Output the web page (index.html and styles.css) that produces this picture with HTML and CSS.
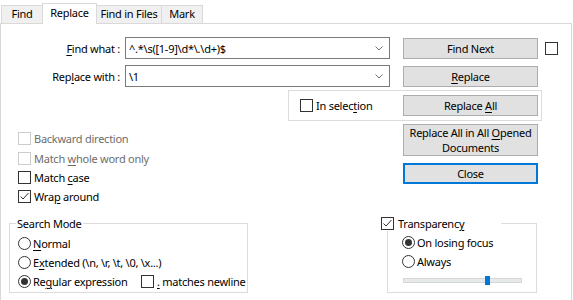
FILE: index.html
```html
<!DOCTYPE html>
<html>
	<head>
		<meta charset="utf-8">
		<title>Replace</title>
		<link rel="stylesheet" href="styles.css">
	</head>
	<body>
		<div class="tabs">
			<span class="tab tab-find">Find</span>
			<span class="tab tab-replace active">Replace</span>
			<span class="tab tab-files">Find in Files</span>
			<span class="tab tab-mark">Mark</span>
		</div>
		<div class="panel">
			<div class="row first">
				<span class="lbl"><u>F</u>ind what :</span>
				<div class="combo">
					<span class="val">^.*\s([1-9]\d*\.\d+)$</span>
					<svg class="chev" width="8" height="5" viewBox="0 0 8 5"><path d="M0.5 0.5 L4 4 L7.5 0.5" fill="none" stroke="#707070"/></svg>
				</div>
				<button class="btn">Find Next</button>
				<span class="box side"></span>
			</div>
			<div class="row">
				<span class="lbl">Rep<u>l</u>ace with :</span>
				<div class="combo">
					<span class="val">\1</span>
					<svg class="chev" width="8" height="5" viewBox="0 0 8 5"><path d="M0.5 0.5 L4 4 L7.5 0.5" fill="none" stroke="#707070"/></svg>
				</div>
				<button class="btn"><u>R</u>eplace</button>
			</div>
			<div class="selgroup">
				<label class="check"><span class="box"></span><span>In selec<u>t</u>ion</span></label>
				<button class="btn">Replace <u>A</u>ll</button>
			</div>
			<div class="mid">
				<div class="options">
					<label class="check disabled"><span class="box"></span><span>Backward direction</span></label>
					<label class="check disabled"><span class="box"></span><span>Match <u>w</u>hole word only</span></label>
					<label class="check"><span class="box"></span><span>Match <u>c</u>ase</span></label>
					<label class="check"><span class="box"><svg width="11" height="11" viewBox="0 0 11 11"><path d="M1.5 5.5 L4 8 L9.5 2" fill="none" stroke="#333" stroke-width="1"/></svg></span><span>Wra<u>p</u> around</span></label>
				</div>
				<div class="actions">
					<button class="btn tall">Replace All in All <u>O</u>pened<br>Documents</button>
					<button class="btn focus">Close</button>
				</div>
			</div>
			<div class="bottom">
				<fieldset class="mode">
					<legend>Search Mode</legend>
					<label class="radio"><span class="dot"></span><span><u>N</u>ormal</span></label>
					<label class="radio"><span class="dot"></span><span>E<u>x</u>tended (\n, \r, \t, \0, \x...)</span></label>
					<div class="radio-row">
						<label class="radio on wide"><span class="dot"></span><span>Re<u>g</u>ular expression</span></label>
						<label class="check"><span class="box"></span><span><u>.</u> matches newline</span></label>
					</div>
				</fieldset>
				<fieldset class="transp">
					<legend><label class="check"><span class="box"><svg width="11" height="11" viewBox="0 0 11 11"><path d="M1.5 5.5 L4 8 L9.5 2" fill="none" stroke="#333" stroke-width="1"/></svg></span><span>Transparenc<u>y</u></span></label></legend>
					<label class="radio on"><span class="dot"></span><span>On losing focus</span></label>
					<label class="radio"><span class="dot"></span><span>Always</span></label>
					<div class="slider"><span class="thumb"></span></div>
				</fieldset>
			</div>
		</div>
	</body>
</html>
```

FILE: styles.css
```css
body {
	margin: 0;
	width: 573px;
	height: 300px;
	overflow: hidden;
	background: #fff;
	font-family: "Noto Sans", sans-serif;
	font-size: 11px;
	letter-spacing: -0.25px;
	color: #000;
}

u {
	text-underline-offset: 2px;
}

/* tabs */
.tabs {
	display: flex;
	align-items: flex-end;
	height: 24px;
	padding-left: 1px;
}

.tab {
	box-sizing: border-box;
	height: 18px;
	margin-bottom: 1px;
	line-height: 16px;
	text-align: center;
	white-space: nowrap;
	background: #f0f0f0;
	border: 1px solid #d9d9d9;
	border-bottom: none;
}

.tab.active {
	position: relative;
	z-index: 1;
	height: 21px;
	margin-bottom: 0;
	line-height: 18px;
	background: #fff;
}

.tab-find { width: 41px; border-right: none; }
.tab-replace { width: 55px; }
.tab-files { width: 65px; border-left: none; }
.tab-mark { width: 41px; border-left: none; }

.panel {
	box-sizing: border-box;
	width: 572px;
	height: 290px;
	margin-top: -1px;
	padding-top: 13px;
	border: 1px solid #d9d9d9;
}

/* top rows */
.row {
	display: flex;
	align-items: center;
	height: 22px;
}

.row + .row {
	margin-top: 6px;
}

.lbl {
	width: 119px;
	margin-right: 5px;
	text-align: right;
}

.combo {
	box-sizing: border-box;
	display: flex;
	align-items: center;
	width: 265px;
	height: 22px;
	padding: 0 4px 0 3px;
	border: 1px solid #7a7a7a;
}

.combo .val {
	flex: 1;
}

.chev {
	margin-right: 2px;
}

.btn {
	box-sizing: border-box;
	width: 135px;
	height: 21px;
	margin: 0 0 0 13px;
	padding: 0;
	font: inherit;
	letter-spacing: inherit;
	color: #000;
	text-align: center;
	white-space: nowrap;
	background: #e1e1e1;
	border: 1px solid #adadad;
}

.box {
	box-sizing: border-box;
	display: flex;
	align-items: center;
	justify-content: center;
	width: 13px;
	height: 13px;
	flex-shrink: 0;
	border: 1px solid #333;
	background: #fff;
}

.box.side {
	margin-left: 7px;
}

.check {
	display: flex;
	align-items: center;
	height: 19px;
	white-space: nowrap;
}

.check .box {
	margin-right: 3px;
}

.check.disabled {
	color: #6d6d6d;
}

.check.disabled .box {
	border-color: #cccccc;
}

/* in selection box */
.selgroup {
	box-sizing: border-box;
	display: flex;
	align-items: center;
	width: 254px;
	height: 31px;
	margin: 3px 0 0 287px;
	padding-left: 11px;
	border: 1px solid #dcdcdc;
}

.selgroup .btn {
	margin-left: auto;
	margin-right: 3px;
}

/* options and big buttons */
.mid {
	display: flex;
	margin-top: 3px;
}

.options {
	width: 385px;
	padding: 5px 0 0 17px;
}

.options .check:nth-child(2) {
	height: 20px;
}

.actions {
	display: flex;
	flex-direction: column;
}

.actions .btn {
	margin: 0;
}

.btn.tall {
	height: 32px;
	line-height: 15px;
}

.actions .btn.focus {
	margin-top: 7px;
	border: 2px solid #0078d7;
}

/* group boxes */
.bottom {
	display: flex;
	margin-top: 10px;
}

fieldset {
	box-sizing: border-box;
	height: 77px;
	margin: 0;
	border: 1px solid #dcdcdc;
}

legend {
	padding: 0 1px;
	line-height: 15px;
}

.mode {
	width: 239px;
	margin-left: 8px;
	padding: 0 0 0 8px;
}

.mode legend {
	margin-left: -2px;
}

.radio {
	display: flex;
	align-items: center;
	height: 19px;
	white-space: nowrap;
}

.mode > .radio:first-of-type {
	margin-top: 2px;
	height: 20px;
}

.radio-row {
	display: flex;
	align-items: center;
}

.radio.wide {
	width: 123px;
	flex-shrink: 0;
}

.dot {
	box-sizing: border-box;
	display: flex;
	align-items: center;
	justify-content: center;
	width: 13px;
	height: 13px;
	flex-shrink: 0;
	margin-right: 2px;
	border: 1px solid #333;
	border-radius: 50%;
	background: #fff;
}

.radio.on .dot::after {
	content: "";
	width: 7px;
	height: 7px;
	border-radius: 50%;
	background: #333;
}

.transp {
	width: 150px;
	margin-left: 139px;
	padding: 0 0 0 14px;
}

.transp legend {
	width: 120px;
	margin-left: -21px;
	padding: 0;
}

.transp legend .check {
	height: 15px;
}

.transp legend .box {
	margin-right: 4px;
}

.transp > .radio:first-of-type {
	margin-top: 1px;
	height: 20px;
}

.slider {
	display: flex;
	align-items: center;
	box-sizing: border-box;
	width: 119px;
	height: 5px;
	margin-top: 7px;
	margin-left: 1px;
	background: #e7eaea;
	border: 1px solid #d6d6d6;
}

.thumb {
	flex-shrink: 0;
	width: 5px;
	height: 9px;
	margin-left: 81px;
	background: #0078d7;
}
```
